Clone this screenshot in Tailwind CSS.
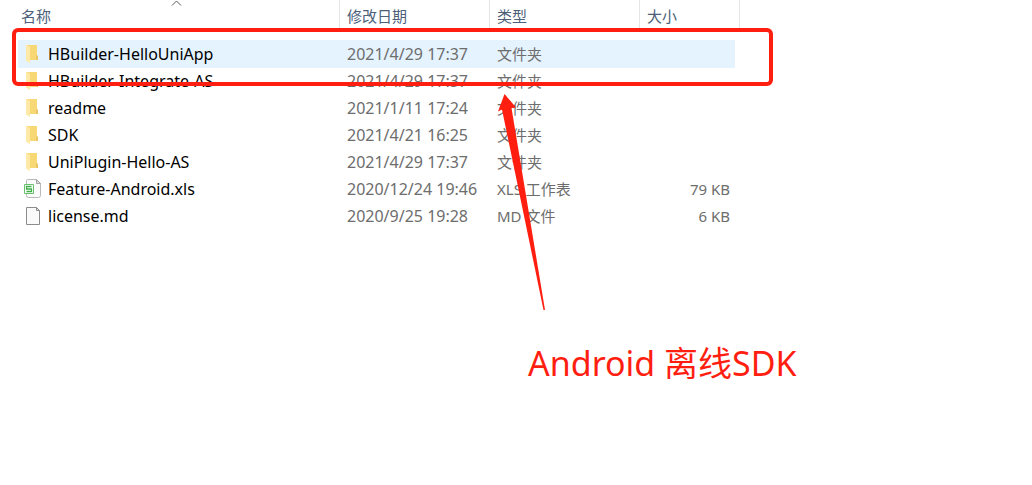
<!doctype html>
<html lang="zh-CN">
<head>
    <meta charset="UTF-8">
    <title>Android 离线SDK</title>
    <script src="https://cdn.jsdelivr.net/npm/@tailwindcss/browser@4"></script>
</head>
<body class="bg-white">
<svg class="hidden" xmlns="http://www.w3.org/2000/svg">
    <symbol id="folder" viewBox="0 0 18 20">
        <path fill="#f8d775" d="M3 1h10v10.500l1 .5v4H3z" />
        <path fill="#e9c566" d="M12 11.500h2V16h-2z" />
        <path fill="#ffe9a6" d="M2 1h1l3 2v16l-4-2.500z" />
    </symbol>
    <symbol id="sheet" viewBox="0 0 18 20">
        <path fill="#fafafa" stroke="#b9b9b9" d="M3.500.5h9l4 4v12a2 2 0 0 1-2 2h-10a2 2 0 0 1-2-2v-15a1 1 0 0 1 1-1z" />
        <path fill="#d9d9d9" stroke="#a5a5a5" d="M12.500.5v4h4z" />
        <path fill="#fff" stroke="#66c06c" d="M.5 5.500h9v9h-9z" />
        <path fill="none" stroke="#3fb049" stroke-width="1.300" d="M7.500 7.500h-5v2.500h5v2.500h-5" />
    </symbol>
    <symbol id="file" viewBox="0 0 18 20">
        <path fill="#fafafa" stroke="#8c8c8c" d="M2.500 1.500h10l3 3v14h-13z" />
        <path fill="#e4e4e4" stroke="#8c8c8c" d="M12.500 1.500v3h3z" />
    </symbol>
</svg>
<main class="relative min-h-screen pl-[18px] font-['Noto_Sans','Noto_Sans_CJK_SC',sans-serif] text-[15px] leading-5">
    <table class="w-[717px] table-fixed border-collapse text-left text-[#6d6d6d]">
        <colgroup>
            <col class="w-[322px]">
            <col class="w-[150px]">
            <col class="w-[150px]">
            <col>
        </colgroup>
        <thead class="text-[#4c607a]">
            <tr class="h-10 align-top">
                <th class="relative p-0 font-normal">
                    <svg class="absolute top-0 left-[153px] h-[7px] w-[11px]" viewBox="0 0 11 7" fill="none" stroke="#5a5a5a">
                        <path d="M1 5.500l4.500-4.500l4.500 4.500" />
                    </svg>
                    <div class="h-8 border-r border-[#e5e5e5] pt-[6px] pl-[3px]">名称</div>
                </th>
                <th class="p-0 font-normal"><div class="h-8 border-r border-[#e5e5e5] pt-[6px] pl-[7px]">修改日期</div></th>
                <th class="p-0 font-normal"><div class="h-8 border-r border-[#e5e5e5] pt-[6px] pl-[7px]">类型</div></th>
                <th class="p-0 font-normal"><div class="-mr-[5px] h-8 border-r border-[#e5e5e5] pt-[6px] pl-[7px]">大小</div></th>
            </tr>
        </thead>
        <tbody>
            <tr class="h-[27px] bg-[#e5f3ff] shadow-[0_1px_#e5f3ff]">
                <td class="p-0"><div class="flex items-center gap-[6px] pl-[6px] text-base/5 text-black"><svg class="h-5 w-[18px]"><use href="#folder" /></svg>HBuilder-HelloUniApp</div></td>
                <td class="p-0 pl-[7px] text-base/5">2021/4/29 17:37</td>
                <td class="p-0 pl-[7px]">文件夹</td>
                <td class="p-0"></td>
            </tr>
            <tr class="h-[27px]">
                <td class="p-0"><div class="flex items-center gap-[6px] pl-[6px] text-base/5 text-black"><svg class="h-5 w-[18px]"><use href="#folder" /></svg>HBuilder-Integrate-AS</div></td>
                <td class="p-0 pl-[7px] text-base/5">2021/4/29 17:37</td>
                <td class="p-0 pl-[7px]">文件夹</td>
                <td class="p-0"></td>
            </tr>
            <tr class="h-[27px]">
                <td class="p-0"><div class="flex items-center gap-[6px] pl-[6px] text-base/5 text-black"><svg class="h-5 w-[18px]"><use href="#folder" /></svg>readme</div></td>
                <td class="p-0 pl-[7px] text-base/5">2021/1/11 17:24</td>
                <td class="p-0 pl-[7px]">文件夹</td>
                <td class="p-0"></td>
            </tr>
            <tr class="h-[27px]">
                <td class="p-0"><div class="flex items-center gap-[6px] pl-[6px] text-base/5 text-black"><svg class="h-5 w-[18px]"><use href="#folder" /></svg>SDK</div></td>
                <td class="p-0 pl-[7px] text-base/5">2021/4/21 16:25</td>
                <td class="p-0 pl-[7px]">文件夹</td>
                <td class="p-0"></td>
            </tr>
            <tr class="h-[27px]">
                <td class="p-0"><div class="flex items-center gap-[6px] pl-[6px] text-base/5 text-black"><svg class="h-5 w-[18px]"><use href="#folder" /></svg>UniPlugin-Hello-AS</div></td>
                <td class="p-0 pl-[7px] text-base/5">2021/4/29 17:37</td>
                <td class="p-0 pl-[7px]">文件夹</td>
                <td class="p-0"></td>
            </tr>
            <tr class="h-[27px]">
                <td class="p-0"><div class="flex items-center gap-[6px] pl-[6px] text-base/5 text-black"><svg class="h-5 w-[18px]"><use href="#sheet" /></svg>Feature-Android.xls</div></td>
                <td class="p-0 pl-[7px] text-base/5">2020/12/24 19:46</td>
                <td class="p-0 pl-[7px]">XLS 工作表</td>
                <td class="p-0 pr-[5px] text-right">79 KB</td>
            </tr>
            <tr class="h-[27px]">
                <td class="p-0"><div class="flex items-center gap-[6px] pl-[6px] text-base/5 text-black"><svg class="h-5 w-[18px]"><use href="#file" /></svg>license.md</div></td>
                <td class="p-0 pl-[7px] text-base/5">2020/9/25 19:28</td>
                <td class="p-0 pl-[7px]">MD 文件</td>
                <td class="p-0 pr-[5px] text-right">6 KB</td>
            </tr>
        </tbody>
    </table>

    <!-- annotations -->
    <div class="absolute top-7 left-3 h-[58px] w-[761px] rounded-md border-4 border-[#ff1e10]"></div>
    <svg class="absolute top-[94px] left-[497px] h-[217px] w-[50px]" viewBox="0 0 50 217" fill="#ff1e10">
        <path d="M7.500 0L19 13.500l-4.500.5L48 216h-1.500L5 15.500L1 17.500z" />
    </svg>
    <p class="absolute top-[340px] left-[528px] text-[34px] leading-[46px] whitespace-nowrap text-[#ff1e10]">Android 离线SDK</p>
</main>
</body>
</html>
